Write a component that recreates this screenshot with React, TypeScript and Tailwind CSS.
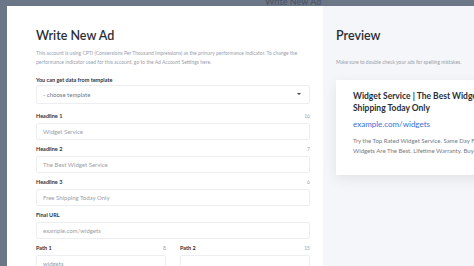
import React from "react";

interface FieldProps {
  label: string;
  value: string;
  count?: string;
}

const Field: React.FC<FieldProps> = ({ label, value, count }) => (
  <div className="flex flex-col">
    <div className="flex items-center justify-between h-[8px]">
      <span className="text-[5.5px] font-bold text-[#2f3440]">{label}</span>
      {count && <span className="text-[5px] text-[#9aa0aa]">{count}</span>}
    </div>
    <div className="mt-[2px] h-[17px] border border-[#eceef1] rounded-[2px] flex items-center px-[6px]">
      <span className="text-[6px] text-[#9aa0a8]">{value}</span>
    </div>
  </div>
);

export default function App() {
  return (
    <div
      className="relative w-[474px] h-[266px] overflow-hidden bg-[#6b7687]"
      style={{ fontFamily: "Lato, 'Noto Sans', sans-serif" }}
    >
      {/* page heading behind the modal */}
      <div className="absolute top-[-5px] left-[265px] text-[9px] font-semibold text-[#505867]">
        Write New Ad
      </div>

      <div className="absolute top-[6px] left-[7px] flex w-[680px] h-[300px]">
        {/* form */}
        <div className="w-[316px] bg-white pl-[29px] pr-[13px] pt-[24px]">
          <h1 className="text-[12.5px] font-semibold text-[#2a2e36] leading-none">
            Write New Ad
          </h1>
          <p className="mt-[6px] text-[5px] leading-[9px] text-[#9aa0aa]">
            This account is using CPTI (Conversions Per Thousand Impressions) as the primary
            performance indicator. To change the performance indicator used for this account,
            go to the Ad Account Settings here.
          </p>

          <div className="mt-[9px] flex flex-col">
            <span className="text-[5.5px] font-bold text-[#2f3440] leading-[8px]">
              You can get data from template
            </span>
            <div className="mt-[1px] h-[19px] border border-[#eceef1] rounded-[2px] flex items-center justify-between px-[6px]">
              <span className="text-[6px] text-[#6f7580]">- choose template</span>
              <span className="w-0 h-0 border-l-[2px] border-r-[2px] border-t-[2px] border-l-transparent border-r-transparent border-t-[#3a3f48] mr-[2px]" />
            </div>
          </div>

          <div className="mt-[9px] flex flex-col gap-[6px]">
            <Field label="Headline 1" value="Widget Service" count="16" />
            <Field label="Headline 2" value="The Best Widget Service" count="7" />
            <Field label="Headline 3" value="Free Shipping Today Only" count="6" />
            <Field label="Final URL" value="example.com/widgets" />
            <div className="grid grid-cols-2 gap-[14px]">
              <Field label="Path 1" value="widgets" count="8" />
              <Field label="Path 2" value="" count="15" />
            </div>
          </div>
        </div>

        {/* preview */}
        <div className="flex-1 bg-[#f5f6f9] pl-[13px] pt-[24px]">
          <h2 className="text-[12.5px] font-semibold text-[#2a2e36] leading-none">Preview</h2>
          <p className="mt-[15px] text-[5px] leading-[8px] text-[#9aa0aa]">
            Make sure to double check your ads for spelling mistakes.
          </p>
          <div className="mt-[14px] w-[290px] bg-white shadow-[0_4px_12px_rgba(30,40,60,0.09)] pl-[17px] pt-[10px] pb-[19px]">
            <div className="text-[8.5px] font-bold text-[#2a2e36] leading-[12px] whitespace-nowrap">
              Widget Service | The Best Widget Service | Free
              <br />
              Shipping Today Only
            </div>
            <div className="mt-[5px] text-[8px] leading-[10px] text-[#3a6fd6]">
              example.com/widgets
            </div>
            <p className="mt-[7px] text-[6px] leading-[10px] text-[#737983] whitespace-nowrap">
              Try the Top Rated Widget Service. Same Day Free Shipping. Our
              <br />
              Widgets Are The Best. Lifetime Warranty. Buy Today!
            </p>
          </div>
        </div>
      </div>
    </div>
  );
}
